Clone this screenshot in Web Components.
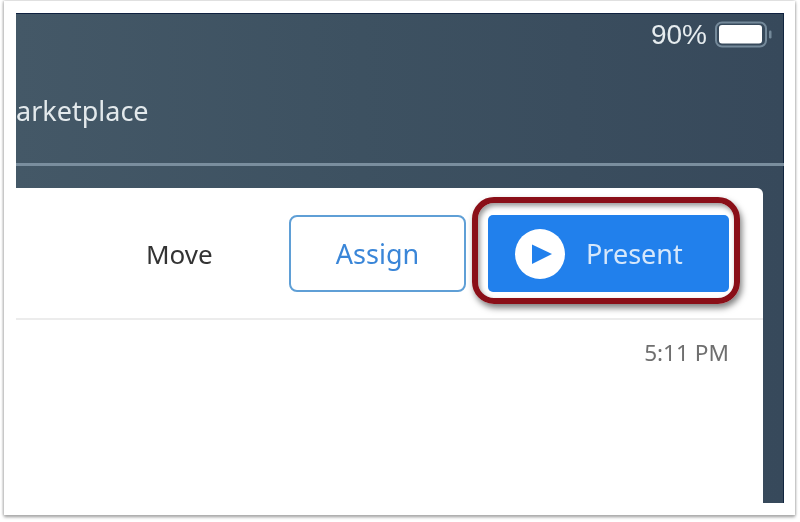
<!DOCTYPE html>
<html>
<head>
<meta charset="utf-8">
<style>
    html, body { margin: 0; padding: 0; background: #fff; }
    body { width: 800px; height: 522px; overflow: hidden; font-family: "Noto Sans", "Open Sans", sans-serif; }
</style>
</head>
<body>
<shot-frame>
    <app-screen>
        <status-bar slot="status" level="90%"></status-bar>
        <nav-strip slot="nav">arketplace</nav-strip>
        <lesson-card slot="card" time="5:11 PM">
            <span slot="move">Move</span>
            <assign-button slot="assign">Assign</assign-button>
            <present-button slot="present">Present</present-button>
        </lesson-card>
    </app-screen>
</shot-frame>

<script>
class ShotFrame extends HTMLElement {
    connectedCallback() {
        this.attachShadow({ mode: 'open' });
        this.shadowRoot.innerHTML = `
            <style>
                :host {
                    display: block;
                    width: 800px;
                    height: 522px;
                    padding: 1px 5px 7px 4px;
                    box-sizing: border-box;
                }
                .sheet {
                    height: 100%;
                    box-sizing: border-box;
                    padding: 12px 11px 12px 12px;
                    background: #fff;
                    box-shadow: -1px 0 2px #c2c2c2, 0 2px 3px #9a9a9a, 1px 0 2px #dcdcdc;
                }
            </style>
            <div class="sheet"><slot></slot></div>
        `;
    }
}

class AppScreen extends HTMLElement {
    connectedCallback() {
        this.attachShadow({ mode: 'open' });
        this.shadowRoot.innerHTML = `
            <style>
                :host {
                    display: flex;
                    flex-direction: column;
                    height: 490px;
                    background: linear-gradient(90deg, #445867 0%, #3d5161 45%, #37495b 100%);
                    box-shadow: inset 0 1px 0 #0f2140, inset -1px 0 0 #12263f;
                }
                .bar {
                    height: 153px;
                    flex: none;
                    box-sizing: border-box;
                    border-bottom: 3px solid #7a8e9e;
                }
                .card {
                    flex: 1;
                    min-height: 0;
                    padding: 22px 21px 0 0;
                    display: flex;
                    flex-direction: column;
                }
            </style>
            <div class="bar">
                <slot name="status"></slot>
                <slot name="nav"></slot>
            </div>
            <div class="card"><slot name="card"></slot></div>
        `;
    }
}

class StatusBar extends HTMLElement {
    connectedCallback() {
        this.attachShadow({ mode: 'open' });
        this.shadowRoot.innerHTML = `
            <style>
                :host {
                    display: flex;
                    justify-content: flex-end;
                    align-items: center;
                    gap: 8px;
                    height: 42px;
                    padding-right: 12px;
                    color: #e6ecef;
                    font-size: 28px;
                    font-family: "Liberation Sans", sans-serif;
                    filter: blur(0.4px);
                }
                span { padding-top: 2px; }
                svg { display: block; }
            </style>
            <span>${this.getAttribute('level')}</span>
            <svg width="57" height="27" viewBox="0 0 57 27">
                <rect x="1" y="1.5" width="50" height="24" rx="6" fill="none" stroke="#74899a" stroke-width="2"/>
                <rect x="4" y="4" width="43" height="18.5" rx="3" fill="#fff"/>
                <rect x="54" y="9.5" width="2.5" height="8" rx="1.2" fill="#74899a"/>
            </svg>
        `;
    }
}

class NavStrip extends HTMLElement {
    connectedCallback() {
        this.attachShadow({ mode: 'open' });
        this.shadowRoot.innerHTML = `
            <style>
                :host {
                    display: block;
                    padding-top: 39px;
                    color: #e3e9ec;
                    font-size: 27px;
                    line-height: 34px;
                    filter: blur(0.4px);
                }
            </style>
            <slot></slot>
        `;
    }
}

class LessonCard extends HTMLElement {
    connectedCallback() {
        this.attachShadow({ mode: 'open' });
        this.shadowRoot.innerHTML = `
            <style>
                :host {
                    display: block;
                    flex: 1;
                    background: #fff;
                    border-top-right-radius: 6px;
                }
                .tools {
                    display: flex;
                    align-items: center;
                    height: 132px;
                    box-sizing: border-box;
                    padding: 27px 34px 26px 0;
                    border-bottom: 2px solid #ececec;
                }
                .move {
                    margin-left: 130px;
                    width: 143px;
                    color: #333;
                    font-size: 26px;
                    filter: blur(0.4px);
                }
                .gap { width: 22px; }
                .time {
                    padding: 18px 34px 0 0;
                    text-align: right;
                    color: #6f6f6f;
                    font-size: 22.6px;
                    line-height: 30px;
                    filter: blur(0.4px);
                }
            </style>
            <div class="tools">
                <div class="move"><slot name="move"></slot></div>
                <slot name="assign"></slot>
                <div class="gap"></div>
                <slot name="present"></slot>
            </div>
            <div class="time">${this.getAttribute('time')}</div>
        `;
    }
}

class AssignButton extends HTMLElement {
    connectedCallback() {
        this.attachShadow({ mode: 'open' });
        this.shadowRoot.innerHTML = `
            <style>
                :host {
                    display: flex;
                    align-items: center;
                    justify-content: center;
                    width: 177px;
                    height: 77px;
                    box-sizing: border-box;
                    border: 2px solid #5f9fd6;
                    border-radius: 8px;
                    color: #3a86d8;
                    font-size: 27px;
                }
                span { filter: blur(0.4px); }
            </style>
            <span><slot></slot></span>
        `;
    }
}

class PresentButton extends HTMLElement {
    connectedCallback() {
        this.attachShadow({ mode: 'open' });
        this.shadowRoot.innerHTML = `
            <style>
                :host {
                    display: flex;
                    align-items: center;
                    position: relative;
                    width: 241px;
                    height: 77px;
                    box-sizing: border-box;
                    padding-left: 27px;
                    gap: 21px;
                    background: #2180ec;
                    border-radius: 5px;
                    color: #d5e7fb;
                    font-size: 27px;
                }
                svg { display: block; flex: none; }
                span { filter: blur(0.4px); }
                .callout {
                    position: absolute;
                    inset: -18px -11px -12px -16px;
                    border: 6px solid #8a0f18;
                    border-radius: 22px;
                    box-shadow: 2px 4px 6px rgba(0,0,0,.5), inset 2px 3px 5px rgba(0,0,0,.4);
                }
            </style>
            <svg width="50" height="50" viewBox="0 0 50 50">
                <circle cx="25" cy="25" r="25" fill="#fff"/>
                <path d="M17 15.5 L37 25 L17 35 Z" fill="#2180ec"/>
            </svg>
            <span><slot></slot></span>
            <div class="callout"></div>
        `;
    }
}

customElements.define('shot-frame', ShotFrame);
customElements.define('app-screen', AppScreen);
customElements.define('status-bar', StatusBar);
customElements.define('nav-strip', NavStrip);
customElements.define('lesson-card', LessonCard);
customElements.define('assign-button', AssignButton);
customElements.define('present-button', PresentButton);
</script>
</body>
</html>
